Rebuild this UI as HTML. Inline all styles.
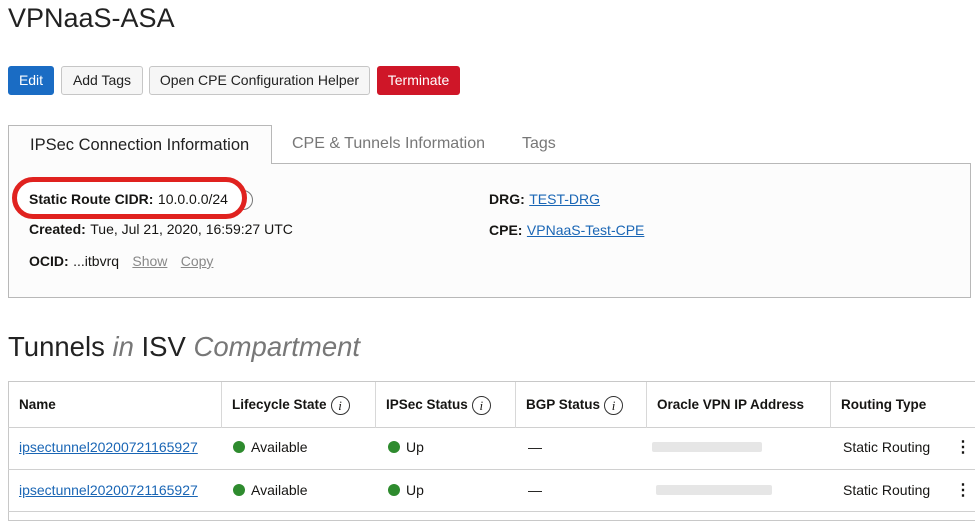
<!DOCTYPE html>
<html><head><style>
*{margin:0;padding:0;box-sizing:border-box}
body{width:975px;height:515px;overflow:hidden;background:#fff;font-family:"Liberation Sans",Arial,sans-serif;color:#161513;position:relative}
.a{position:absolute;white-space:nowrap}
.btn{position:absolute;top:66px;height:29px;border-radius:3px;font-size:14px;line-height:27px;text-align:center;border:1px solid #c6c6c6;background:#f6f6f6;color:#222}
a{color:#1a66b5;text-decoration:underline}
.lbl{font-weight:bold;font-size:14px}
.v{font-size:14px}
.th{position:absolute;top:382px;height:46px;font-size:13.5px;font-weight:bold;line-height:46px;padding-left:10px;border-right:1px solid #d8d8d8}
.i{display:inline-block;width:19px;height:19px;border:1px solid #333;border-radius:50%;font-style:italic;font-weight:normal;font-family:"Liberation Serif",serif;font-size:13px;line-height:17px;text-align:center;vertical-align:middle;margin-left:4px}
.dot{display:inline-block;width:12px;height:12px;border-radius:50%;background:#2e8b2e;vertical-align:-1px;margin-right:6px}
.cell{position:absolute;font-size:14px}
.blur{position:absolute;height:10px;background:#e6e6e6;border-radius:2px}
</style></head><body>
<div class="a" style="left:8px;top:3px;font-size:27px;color:#222">VPNaaS-ASA</div>
<div class="btn" style="left:8px;width:46px;background:#1a6cc4;border-color:#1a6cc4;color:#fff">Edit</div>
<div class="btn" style="left:61px;width:82px">Add Tags</div>
<div class="btn" style="left:149px;width:221px">Open CPE Configuration Helper</div>
<div class="btn" style="left:377px;width:83px;background:#cf1628;border-color:#cf1628;color:#fff">Terminate</div>

<div class="a" style="left:8px;top:163px;width:963px;height:135px;border:1px solid #b8b8b8;background:#fcfcfc"></div>
<div class="a" style="left:8px;top:125px;width:264px;height:39px;border:1px solid #b8b8b8;border-bottom:none;background:#fcfcfc;font-size:16.5px;line-height:38px;padding-left:21px;color:#222">IPSec Connection Information</div>
<div class="a" style="left:292px;top:135px;font-size:16px;color:#777">CPE &amp; Tunnels Information</div>
<div class="a" style="left:522px;top:135px;font-size:16px;color:#777">Tags</div>

<div class="a" style="left:233px;top:190px;width:20px;height:20px;border:1px solid #777;border-radius:50%"></div>
<div class="a" style="left:12px;top:177px;width:235px;height:42px;border:5px solid #e0221f;border-radius:21px;background:#fff"></div>
<div class="a" style="left:29px;top:191px"><span class="lbl">Static Route CIDR:</span> <span class="v">10.0.0.0/24</span></div>
<div class="a" style="left:29px;top:221px"><span class="lbl">Created:</span> <span class="v">Tue, Jul 21, 2020, 16:59:27 UTC</span></div>
<div class="a" style="left:29px;top:253px"><span class="lbl">OCID:</span> <span class="v">...itbvrq</span>&nbsp;&nbsp; <span class="v" style="color:#888;text-decoration:underline">Show</span>&nbsp;&nbsp; <span class="v" style="color:#888;text-decoration:underline">Copy</span></div>
<div class="a" style="left:489px;top:191px"><span class="lbl">DRG:</span> <a class="v">TEST-DRG</a></div>
<div class="a" style="left:489px;top:222px"><span class="lbl">CPE:</span> <a class="v">VPNaaS-Test-CPE</a></div>

<div class="a" style="left:8px;top:331px;font-size:27.5px;color:#222">Tunnels <i style="color:#777">in</i> ISV <i style="color:#777">Compartment</i></div>

<div class="a" style="left:8px;top:381px;width:967px;height:140px;border:1px solid #c8c8c8;border-right:none"></div>
<div class="a" style="left:8px;top:427px;width:967px;height:1px;background:#d0d0d0"></div>
<div class="a" style="left:8px;top:469px;width:967px;height:1px;background:#d0d0d0"></div>
<div class="a" style="left:8px;top:511px;width:967px;height:1px;background:#d0d0d0"></div>
<div class="th" style="left:9px;width:213px">Name</div>
<div class="th" style="left:222px;width:154px">Lifecycle State<span class="i">i</span></div>
<div class="th" style="left:376px;width:140px">IPSec Status<span class="i">i</span></div>
<div class="th" style="left:516px;width:131px">BGP Status<span class="i">i</span></div>
<div class="th" style="left:647px;width:184px">Oracle VPN IP Address</div>
<div class="th" style="left:831px;width:144px;border:none">Routing Type</div>

<div class="cell" style="left:19px;top:439px"><a>ipsectunnel20200721165927</a></div>
<div class="cell" style="left:233px;top:439px"><span class="dot"></span>Available</div>
<div class="cell" style="left:388px;top:439px"><span class="dot"></span>Up</div>
<div class="cell" style="left:528px;top:439px">—</div>
<div class="blur" style="left:652px;top:442px;width:110px"></div>
<div class="cell" style="left:843px;top:439px">Static Routing</div>
<div class="cell" style="left:955px;top:437px;font-weight:bold;font-size:16px">⋮</div>

<div class="cell" style="left:19px;top:482px"><a>ipsectunnel20200721165927</a></div>
<div class="cell" style="left:233px;top:482px"><span class="dot"></span>Available</div>
<div class="cell" style="left:388px;top:482px"><span class="dot"></span>Up</div>
<div class="cell" style="left:528px;top:482px">—</div>
<div class="blur" style="left:656px;top:485px;width:116px"></div>
<div class="cell" style="left:843px;top:482px">Static Routing</div>
<div class="cell" style="left:955px;top:480px;font-weight:bold;font-size:16px">⋮</div>
</body></html>
